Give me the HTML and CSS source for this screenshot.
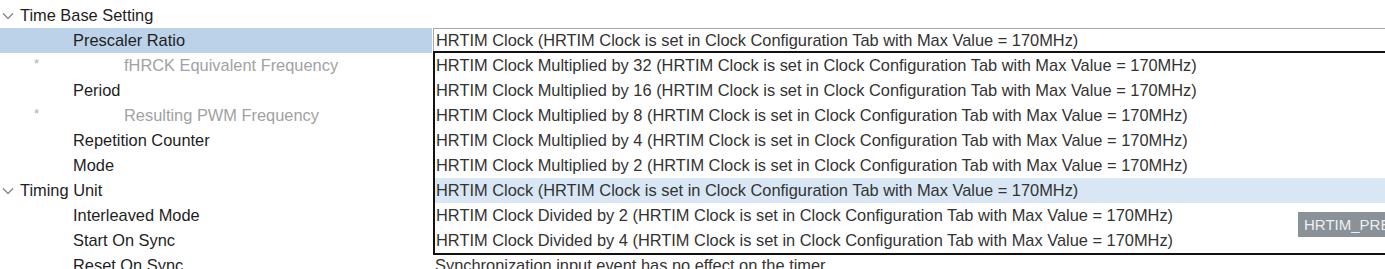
FILE: index.html
```html
<!DOCTYPE html>
<html lang="en">
<head>
    <meta charset="UTF-8">
    <title>HRTIM Parameter Settings</title>
    <link rel="stylesheet" href="styles.css">
</head>
<body>
    <div class="param-tree">
        <div class="tree-row group-row">
            <div class="label-cell">
                <svg class="chevron" width="12" height="8" viewBox="0 0 12 8"><polyline points="1,1.5 6,6.5 11,1.5" fill="none" stroke="#7a7a7a" stroke-width="1.1"/></svg>
                <span class="label-text">Time Base Setting</span>
            </div>
            <div class="value-cell"></div>
        </div>
        <div class="tree-row item-row selected">
            <div class="label-cell"><span class="label-text">Prescaler Ratio</span></div>
            <div class="value-cell">
                <div class="combo-box">HRTIM Clock (HRTIM Clock is set in Clock Configuration Tab with Max Value = 170MHz)</div>
            </div>
        </div>
        <div class="tree-row sub-row disabled">
            <div class="label-cell"><span class="star">*</span><span class="label-text">fHRCK Equivalent Frequency</span></div>
            <div class="value-cell"></div>
        </div>
        <div class="tree-row item-row">
            <div class="label-cell"><span class="label-text">Period</span></div>
            <div class="value-cell"></div>
        </div>
        <div class="tree-row sub-row disabled">
            <div class="label-cell"><span class="star">*</span><span class="label-text">Resulting PWM Frequency</span></div>
            <div class="value-cell"></div>
        </div>
        <div class="tree-row item-row">
            <div class="label-cell"><span class="label-text">Repetition Counter</span></div>
            <div class="value-cell"></div>
        </div>
        <div class="tree-row item-row">
            <div class="label-cell"><span class="label-text">Mode</span></div>
            <div class="value-cell"></div>
        </div>
        <div class="tree-row group-row">
            <div class="label-cell">
                <svg class="chevron" width="12" height="8" viewBox="0 0 12 8"><polyline points="1,1.5 6,6.5 11,1.5" fill="none" stroke="#7a7a7a" stroke-width="1.1"/></svg>
                <span class="label-text">Timing Unit</span>
            </div>
            <div class="value-cell"></div>
        </div>
        <div class="tree-row item-row">
            <div class="label-cell"><span class="label-text">Interleaved Mode</span></div>
            <div class="value-cell"></div>
        </div>
        <div class="tree-row item-row">
            <div class="label-cell"><span class="label-text">Start On Sync</span></div>
            <div class="value-cell"></div>
        </div>
        <div class="tree-row item-row">
            <div class="label-cell"><span class="label-text">Reset On Sync</span></div>
            <div class="value-cell"><span class="value-text">Synchronization input event has no effect on the timer</span></div>
        </div>

        <!-- open dropdown of the Prescaler Ratio combo -->
        <ul class="dropdown-list">
            <li>HRTIM Clock Multiplied by 32 (HRTIM Clock is set in Clock Configuration Tab with Max Value = 170MHz)</li>
            <li>HRTIM Clock Multiplied by 16 (HRTIM Clock is set in Clock Configuration Tab with Max Value = 170MHz)</li>
            <li>HRTIM Clock Multiplied by 8 (HRTIM Clock is set in Clock Configuration Tab with Max Value = 170MHz)</li>
            <li>HRTIM Clock Multiplied by 4 (HRTIM Clock is set in Clock Configuration Tab with Max Value = 170MHz)</li>
            <li>HRTIM Clock Multiplied by 2 (HRTIM Clock is set in Clock Configuration Tab with Max Value = 170MHz)</li>
            <li class="hovered">HRTIM Clock (HRTIM Clock is set in Clock Configuration Tab with Max Value = 170MHz)</li>
            <li>HRTIM Clock Divided by 2 (HRTIM Clock is set in Clock Configuration Tab with Max Value = 170MHz)</li>
            <li>HRTIM Clock Divided by 4 (HRTIM Clock is set in Clock Configuration Tab with Max Value = 170MHz)</li>
        </ul>

        <div class="tooltip">HRTIM_PRESCALERRATIO_MUL32</div>
    </div>
</body>
</html>
```

FILE: styles.css
```css
* {
    margin: 0;
    padding: 0;
    box-sizing: border-box;
}

body {
    background: #ffffff;
    font-family: 'Liberation Sans', Arial, sans-serif;
    font-size: 16.4px;
    color: #1e1e1e;
    overflow: hidden;
    width: 1385px;
    height: 269px;
}

.param-tree {
    position: relative;
    padding-top: 3px;
}

.tree-row {
    display: flex;
    height: 25px;
    align-items: stretch;
}

.label-cell {
    width: 432px;
    flex-shrink: 0;
    display: flex;
    align-items: center;
    white-space: nowrap;
    position: relative;
}

.value-cell {
    flex: 1;
    display: flex;
    align-items: center;
    white-space: nowrap;
    overflow: hidden;
}

.group-row .label-cell {
    padding-left: 2px;
}

.chevron {
    margin-right: 6px;
    margin-top: 1px;
}

.item-row .label-cell {
    padding-left: 73px;
}

.sub-row .label-cell {
    padding-left: 124px;
}

.star {
    position: absolute;
    left: 34px;
    top: 3px;
    font-size: 13px;
    color: #b0b0b0;
}

.disabled .label-text {
    color: #a2a2a2;
}

.selected .label-cell {
    background: #bcd2e8;
}

.combo-box {
    height: 25px;
    width: 1000px;
    margin-left: 1px;
    border: 1px solid #a9a9a9;
    border-right: none;
    background: #fff;
    padding-left: 2px;
    line-height: 23px;
    color: #333;
}

.value-text {
    padding-left: 3px;
    color: #333;
}

.dropdown-list {
    position: absolute;
    top: 51px;
    left: 433px;
    width: 1000px;
    list-style: none;
    background: #fff;
    border: 2px solid #111;
    border-right: none;
}

.dropdown-list li {
    height: 25px;
    line-height: 25px;
    padding-left: 1px;
    color: #333;
    white-space: nowrap;
}

.dropdown-list li.hovered {
    background: #d9e7f5;
}

.tooltip {
    position: absolute;
    top: 212px;
    left: 1298px;
    height: 25px;
    line-height: 25px;
    padding: 0 6px;
    background: #8a9197;
    color: #eef0f2;
    font-size: 15px;
    white-space: nowrap;
}
```
